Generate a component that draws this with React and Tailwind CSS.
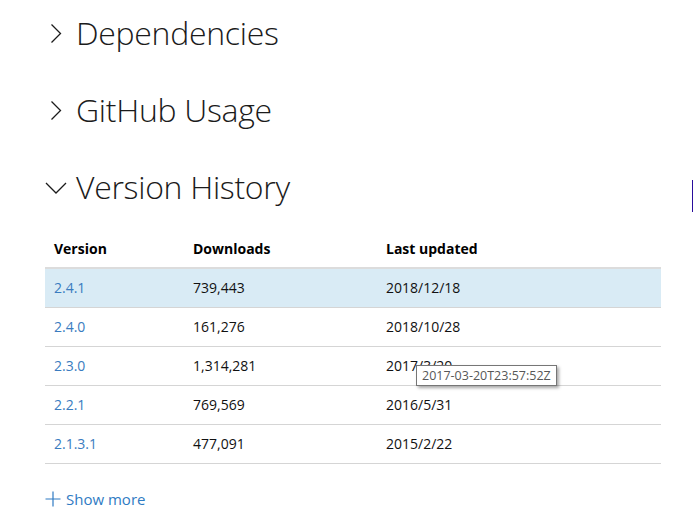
import React from 'react';

const versions = [
  { v: '2.4.1', d: '739,443', u: '2018/12/18', active: true },
  { v: '2.4.0', d: '161,276', u: '2018/10/28' },
  { v: '2.3.0', d: '1,314,281', u: '2017/3/20', tip: '2017-03-20T23:57:52Z' },
  { v: '2.2.1', d: '769,569', u: '2016/5/31' },
  { v: '2.1.3.1', d: '477,091', u: '2015/2/22' },
];

const ChevronRight = () => (
  <svg width="12" height="21" viewBox="0 0 12 21" fill="none" className="shrink-0">
    <path d="M1.5 1.5 L10.5 10.5 L1.5 19.5" stroke="#1b1b1b" strokeWidth="1.3" />
  </svg>
);

const ChevronDown = () => (
  <svg width="22" height="12" viewBox="0 0 22 12" fill="none" className="shrink-0">
    <path d="M1 1 L11 11 L21 1" stroke="#1b1b1b" strokeWidth="1.3" />
  </svg>
);

const Section = ({ title, open }) => (
  <div className="flex items-center h-[40px]">
    <div className={open ? 'w-[31px] flex items-center pt-[2px]' : 'w-[31px] flex items-center pl-[5px] pt-[1px]'}>
      {open ? <ChevronDown /> : <ChevronRight />}
    </div>
    <h2 className="text-[32px] leading-[40px] font-light text-[#1b1b1b] tracking-[-0.3px]">{title}</h2>
  </div>
);

export default function App() {
  return (
    <div className="relative w-[693px] h-[507px] overflow-hidden bg-white font-['Segoe_UI','Open_Sans',sans-serif]">
      <div className="absolute right-0 top-[180px] w-px h-[32px] bg-[#2a0d9c]" />

      <div className="pl-[45px] pr-[32px] pt-[13px] flex flex-col">
        <div className="flex flex-col gap-[37px]">
          <Section title="Dependencies" />
          <Section title="GitHub Usage" />
          <Section title="Version History" open />
        </div>

        <div className="mt-[24px] text-[14px] leading-[20px]">
          <div className="grid grid-cols-[139px_193px_1fr] px-[9px] pt-[8px] pb-[8px] border-b-2 border-[#dcdcdc] font-bold text-black">
            <div>Version</div>
            <div>Downloads</div>
            <div>Last updated</div>
          </div>
          {versions.map((r) => (
            <div
              key={r.v}
              className={
                r.active
                  ? 'grid grid-cols-[139px_193px_1fr] items-center px-[9px] h-[39px] border-b border-[#d5d5d5] bg-[#d9ebf5]'
                  : 'grid grid-cols-[139px_193px_1fr] items-center px-[9px] h-[39px] border-b border-[#d5d5d5]'
              }
            >
              <div className="text-[#3a7cc0]">{r.v}</div>
              <div className="text-[#111]">{r.d}</div>
              <div className="relative text-[#111]">
                {r.u}
                {r.tip && (
                  <div className="absolute left-[30px] top-[9px] px-[5px] h-[21px] flex items-center bg-white border border-[#767676] text-[12.5px] leading-[14px] text-[#575757] shadow-[2px_2px_3px_rgba(0,0,0,0.35)] whitespace-nowrap">
                    {r.tip}
                  </div>
                )}
              </div>
            </div>
          ))}
        </div>

        <div className="mt-[25px] flex items-center gap-[5px] text-[#2f7bc3] text-[15px] leading-[20px]">
          <svg width="16" height="16" viewBox="0 0 16 16" fill="none">
            <path d="M8 0.5 V15.5 M0.5 8 H15.5" stroke="#2f7bc3" strokeWidth="1.2" />
          </svg>
          <span>Show more</span>
        </div>
      </div>
    </div>
  );
}
